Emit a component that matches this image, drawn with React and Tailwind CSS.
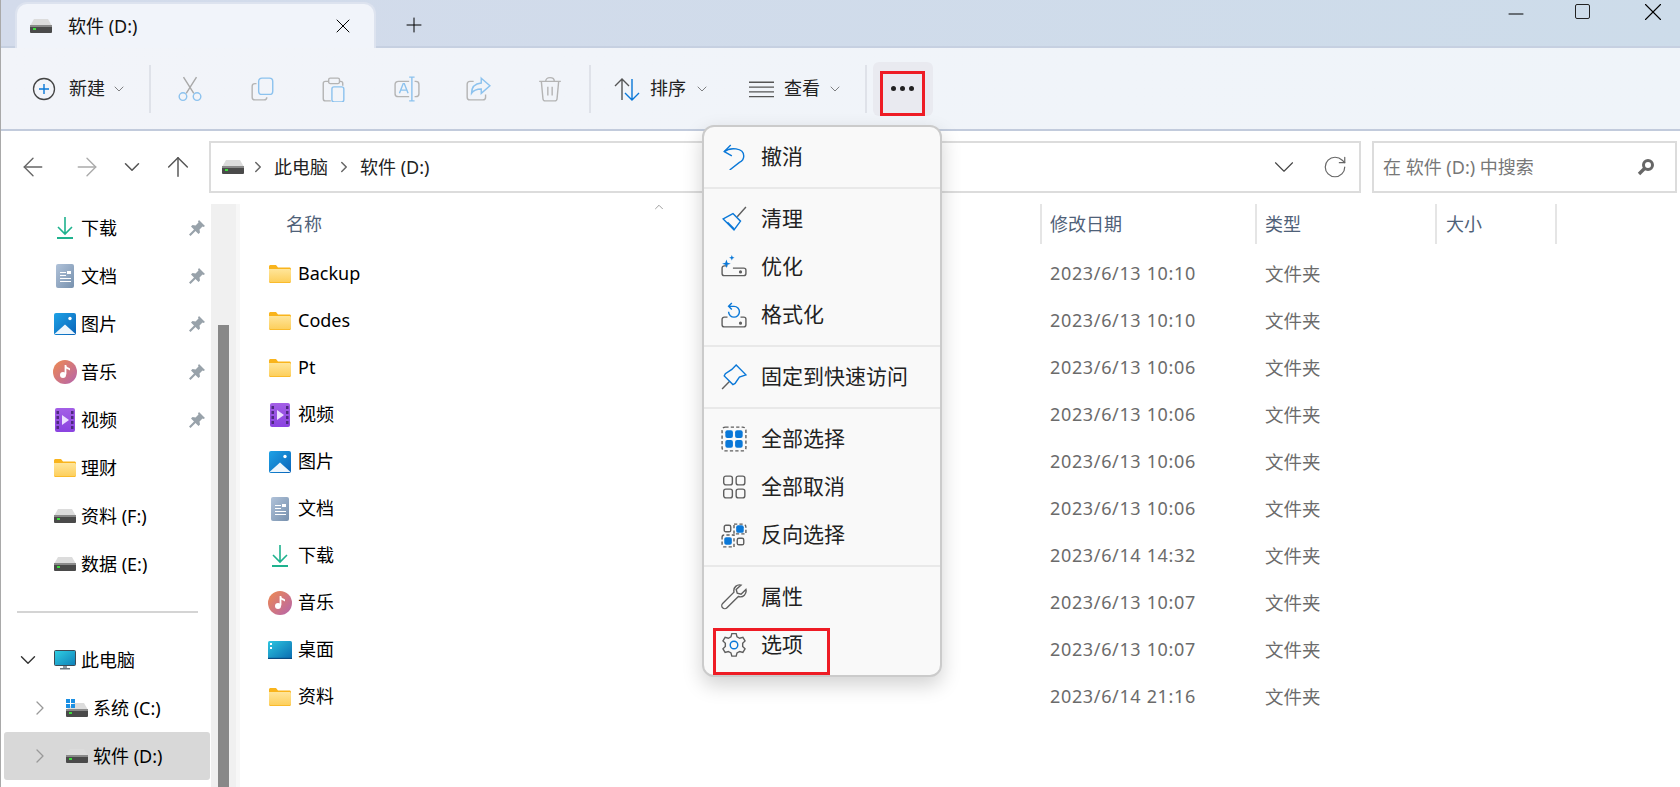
import { ArrowLeft, ArrowRight, ArrowUp, ChevronDown, ChevronRight, Minus, Plus, RotateCw, X } from "lucide-react";

const FONT = "[font-family:'Noto_Sans','Noto_Sans_CJK_SC',sans-serif]";

function Drive({ className = "w-[22px] h-[14px]" }) {
  return (
    <svg viewBox="0 0 22 14" className={className}>
      <path d="M4 0h14l4 7H0z" fill="#dcdcdc" />
      <rect y="6" width="22" height="8" rx="1" fill="#4a4a4a" />
      <rect y="6" width="22" height="2" fill="#8a8a8a" />
      <rect x="3" y="9" width="3" height="2" fill="#3ddc3d" />
    </svg>
  );
}

function Folder() {
  return (
    <svg viewBox="0 0 22 18" className="w-[22px] h-[18px]">
      <defs>
        <linearGradient id="folderFill" x1="0" y1="0" x2="0" y2="1">
          <stop offset="0" stopColor="#ffe59a" />
          <stop offset="1" stopColor="#fdcf5c" />
        </linearGradient>
      </defs>
      <path d="M0 1.500C0 .7.7 0 1.500 0H7l2 2.500h11.500c.8 0 1.500.7 1.500 1.500v12.500c0 .8-.7 1.500-1.500 1.500h-19C.7 18 0 17.300 0 16.500z" fill="#f9b41c" />
      <path d="M0 4h20.500c.8 0 1.500.7 1.500 1.500v10.500c0 .8-.7 1.200-1.500 1.200h-19C.7 17.200 0 16.800 0 16z" fill="url(#folderFill)" />
    </svg>
  );
}

function Video() {
  return (
    <svg viewBox="0 0 20 24" className="w-[20px] h-[24px]">
      <defs>
        <linearGradient id="videoFill" x1="0" y1="0" x2="0" y2="1">
          <stop offset="0" stopColor="#a35fe6" />
          <stop offset="1" stopColor="#8a43e0" />
        </linearGradient>
      </defs>
      <rect width="20" height="24" rx="2" fill="url(#videoFill)" />
      {[3, 8, 13, 18].map((y) => (
        <g key={y} fill="#4e2a7f">
          <rect x="1.500" y={y} width="2.500" height="3" />
          <rect x="16" y={y} width="2.500" height="3" />
        </g>
      ))}
      <path d="M7 7l7 5-7 5z" fill="#ecdfff" />
    </svg>
  );
}

function Picture() {
  return (
    <svg viewBox="0 0 22 22" className="w-[22px] h-[22px]">
      <defs>
        <linearGradient id="picFill" x1="0" y1="0" x2="1" y2="1">
          <stop offset="0" stopColor="#1ea2e6" />
          <stop offset="1" stopColor="#0a63b8" />
        </linearGradient>
      </defs>
      <rect width="22" height="22" rx="2" fill="url(#picFill)" />
      <circle cx="16" cy="5.500" r="1.700" fill="#fff" />
      <path d="M1 20.500L11 11.500l10 9V21H1z" fill="#eef6fc" />
    </svg>
  );
}

function Doc() {
  return (
    <svg viewBox="0 0 18 24" className="w-[18px] h-[24px]">
      <defs>
        <linearGradient id="docFill" x1="0" y1="0" x2="1" y2="1">
          <stop offset="0" stopColor="#b0c2d9" />
          <stop offset="1" stopColor="#7791ae" />
        </linearGradient>
      </defs>
      <rect width="18" height="24" rx="2" fill="url(#docFill)" />
      <g fill="#fff">
        <rect x="4" y="8" width="6" height="1" />
        <rect x="4" y="11" width="6" height="1" />
        <rect x="4" y="14" width="11" height="1" />
        <rect x="4" y="17" width="11" height="1" />
        <rect x="11" y="7" width="4" height="3" />
      </g>
    </svg>
  );
}

function Download() {
  return (
    <svg viewBox="0 0 18 22" className="w-[18px] h-[22px]" fill="none" stroke="#1fb28e" strokeWidth="1.600">
      <path d="M9 0v17M2 10l7 7 7-7" />
      <path d="M1 21h16" strokeWidth="2" />
    </svg>
  );
}

function Music() {
  return (
    <svg viewBox="0 0 24 24" className="w-[24px] h-[24px]">
      <defs>
        <linearGradient id="musicFill" x1="0" y1="0" x2="1" y2="1">
          <stop offset="0" stopColor="#ef8a4f" />
          <stop offset="1" stopColor="#b564ad" />
        </linearGradient>
      </defs>
      <circle cx="12" cy="12" r="12" fill="url(#musicFill)" />
      <path d="M12.500 5v9.500" stroke="#fff" strokeWidth="1.800" />
      <path d="M12.500 5c.5 2 3.500 2.500 4.500 3.500v2c-1.500-1-3.500-1.500-4.500-2.500z" fill="#fff" />
      <circle cx="10" cy="15" r="3" fill="#fff" />
    </svg>
  );
}

function Desktop() {
  return (
    <svg viewBox="0 0 24 18" className="w-[24px] h-[18px]">
      <defs>
        <linearGradient id="deskFill" x1="0" y1="0" x2="1" y2="1">
          <stop offset="0" stopColor="#2dc6e0" />
          <stop offset="1" stopColor="#0a6bb0" />
        </linearGradient>
      </defs>
      <rect width="24" height="18" rx="1.500" fill="url(#deskFill)" />
      <rect y="16.800" width="24" height="1.200" fill="#0b4a80" />
      <rect x="2" y="2" width="2" height="2" fill="#fff" />
      <rect x="2" y="6" width="2" height="2" fill="#fff" />
    </svg>
  );
}

function Monitor() {
  return (
    <svg viewBox="0 0 22 20" className="w-[22px] h-[20px]">
      <defs>
        <linearGradient id="monFill" x1="0" y1="0" x2="1" y2="1">
          <stop offset="0" stopColor="#2fd0e4" />
          <stop offset="1" stopColor="#0f7fb8" />
        </linearGradient>
      </defs>
      <rect x=".5" y=".5" width="21" height="15" rx="1" fill="url(#monFill)" stroke="#3d4a55" />
      <rect x="9" y="16" width="4" height="2" fill="#8d99a3" />
      <rect x="6" y="18" width="10" height="1.500" fill="#6b7680" />
    </svg>
  );
}

function SystemDrive() {
  return (
    <svg viewBox="0 0 22 18" className="w-[22px] h-[18px]">
      <path d="M8 4h10l4 7H0z" fill="#dcdcdc" />
      <rect y="10" width="22" height="8" rx="1" fill="#4a4a4a" />
      <rect y="10" width="22" height="2" fill="#8a8a8a" />
      <rect x="3" y="13" width="3" height="2" fill="#3ddc3d" />
      <g fill="#1a8fe3">
        <rect width="4" height="4" />
        <rect x="5" width="4" height="4" />
        <rect y="5" width="4" height="4" />
        <rect x="5" y="5" width="4" height="4" />
      </g>
    </svg>
  );
}

function Pin({ className = "w-[16px] h-[16px]" }) {
  return (
    <svg viewBox="0 0 16 16" className={className}>
      <path d="M10 0l6 6-1.500 1-1-.5L10.500 9.500l.5 3-1.500 1.500-3-3L1.500 16 0 14.500 5 9.500 2 6.500 3.500 5l3 .5L9.500 2.500 9 1.500z" fill="#98a2aa" />
    </svg>
  );
}

function ToolIcon({ children }) {
  return (
    <svg viewBox="0 0 24 24" className="w-[26px] h-[26px]" fill="none" strokeWidth="1.300">
      {children}
    </svg>
  );
}

const CaretDown = () => <ChevronDown size={16} strokeWidth={1} className="text-[#444]" />;

function ToolSep({ className }) {
  return <div className={`w-[2px] h-[48px] bg-[#dfe2e9] ${className}`} />;
}

function MenuIcon({ children }) {
  return (
    <svg viewBox="0 0 24 24" className="w-[26px] h-[26px] shrink-0" fill="none" strokeWidth="1.300" stroke="#5f5f5f">
      {children}
    </svg>
  );
}

function MenuItem({ icon, label }) {
  return (
    <div className="flex h-[48px] items-center pl-[17px]">
      {icon}
      <span className="ml-[14px] text-[21px] text-[#222]">{label}</span>
    </div>
  );
}

const MenuSep = () => (
  <div className="flex h-[14px] items-center">
    <div className="h-[2px] w-full bg-[#e9e9e9]" />
  </div>
);

const Tile = ({ x, y, fill }) =>
  fill ? (
    <rect x={x} y={y} width="7" height="7" rx="1.800" fill="#0a78d8" stroke="none" />
  ) : (
    <rect x={x} y={y} width="7" height="7" rx="1.800" />
  );

const sidebarItems = [
  { icon: <Download />, label: "下载", pin: true },
  { icon: <Doc />, label: "文档", pin: true },
  { icon: <Picture />, label: "图片", pin: true },
  { icon: <Music />, label: "音乐", pin: true },
  { icon: <Video />, label: "视频", pin: true },
  { icon: <Folder />, label: "理财" },
  { icon: <Drive />, label: "资料 (F:)" },
  { icon: <Drive />, label: "数据 (E:)" },
];

const files = [
  { icon: <Folder />, name: "Backup", date: "2023/6/13 10:10" },
  { icon: <Folder />, name: "Codes", date: "2023/6/13 10:10" },
  { icon: <Folder />, name: "Pt", date: "2023/6/13 10:06" },
  { icon: <Video />, name: "视频", date: "2023/6/13 10:06" },
  { icon: <Picture />, name: "图片", date: "2023/6/13 10:06" },
  { icon: <Doc />, name: "文档", date: "2023/6/13 10:06" },
  { icon: <Download />, name: "下载", date: "2023/6/14 14:32" },
  { icon: <Music />, name: "音乐", date: "2023/6/13 10:07" },
  { icon: <Desktop />, name: "桌面", date: "2023/6/13 10:07" },
  { icon: <Folder />, name: "资料", date: "2023/6/14 21:16" },
];

function SideIcon({ children }) {
  return <div className="flex w-[24px] shrink-0 items-center justify-center">{children}</div>;
}

export default function App() {
  return (
    <div className={`relative flex h-[787px] w-[1680px] flex-col overflow-hidden border-l border-[#a9a9a9] bg-white text-[18px] text-black ${FONT}`}>
      {/* Tab strip */}
      <div className="flex h-[48px] shrink-0 items-end border-b-2 border-[#c6d0e1] bg-gradient-to-r from-[#d3dbeb] to-[#cddcea]">
        <div className="mb-[-2px] ml-[14px] flex h-[46px] w-[361px] items-center rounded-t-[12px] border-2 border-b-0 border-[#dde3ef] bg-[#f1f4fa] pl-[13px]">
          <Drive />
          <span className="ml-[16px] text-[#111]">软件 (D:)</span>
          <X size={24} strokeWidth={1} className="ml-[194px]" />
        </div>
        <Plus size={24} strokeWidth={1} className="mb-[9px] ml-[26px]" />
        <div className="ml-auto flex items-start self-start pt-[1px]">
          <Minus size={24} strokeWidth={1} className="mr-[47px] mt-[1px]" />
          <div className="mr-[48px] mt-[3px] h-[15px] w-[15px] rounded-[2px] border-[1.5px] border-[#222]" />
          <X size={30} strokeWidth={0.9} className="mr-[12px] mt-[-4px]" />
        </div>
      </div>

      {/* Command bar */}
      <div className="flex h-[83px] shrink-0 items-center border-b-2 border-[#c2cbdc] bg-gradient-to-r from-[#f2f4f9] to-[#eff4f9]">
        <svg viewBox="0 0 24 24" className="ml-[31px] h-[24px] w-[24px]" fill="none">
          <circle cx="12" cy="12" r="10.500" stroke="#444" strokeWidth="1.300" />
          <path d="M12 7v10M7 12h10" stroke="#0a78d8" strokeWidth="1.400" />
        </svg>
        <span className="ml-[13px] text-[#222]">新建</span>
        <div className="ml-[6px]"><CaretDown /></div>
        <ToolSep className="ml-[22px]" />
        <div className="ml-[26px]">
          <ToolIcon>
            <path d="M6 1l9.500 15M18 1L8.500 16" stroke="#a9a9a9" />
            <circle cx="5.500" cy="19" r="3.500" stroke="#8cc2ee" />
            <circle cx="18.500" cy="19" r="3.500" stroke="#8cc2ee" />
          </ToolIcon>
        </div>
        <div className="ml-[47px]">
          <ToolIcon>
            <path d="M6 7H4.500C3 7 2 8 2 9.500v10C2 21 3 22 4.500 22H13c1.500 0 2.500-1 2.500-2.500" stroke="#b4b4b4" />
            <rect x="8" y="2" width="13" height="15" rx="3" stroke="#8cc2ee" />
          </ToolIcon>
        </div>
        <div className="ml-[44px]">
          <ToolIcon>
            <path d="M8 5H5C3.500 5 3 6 3 7v14c0 1 .5 2 2 2h5" stroke="#b4b4b4" />
            <path d="M18 5h1c1 0 2 1 2 2v2" stroke="#b4b4b4" />
            <rect x="8" y="2" width="10" height="5" rx="1.500" stroke="#b4b4b4" />
            <rect x="11" y="10" width="11" height="14" rx="2" stroke="#8cc2ee" />
          </ToolIcon>
        </div>
        <div className="ml-[48px]">
          <ToolIcon>
            <path d="M14 5H4C2.500 5 1 6 1 7.500v9C1 18 2.500 19 4 19h10M19 5h1c1.500 0 3 1 3 2.500v9c0 1.500-1.500 2.500-3 2.500h-1" stroke="#b4b4b4" />
            <path d="M5 16l3.500-9h1l3.500 9M6.500 13h5" stroke="#8cc2ee" />
            <path d="M14 1h5M14 23h5M16.500 1v22" stroke="#8cc2ee" />
          </ToolIcon>
        </div>
        <div className="ml-[45px]">
          <ToolIcon>
            <path d="M8 5H4.500C3 5 2 6 2 7.500v12C2 21 3 22 4.500 22h12c1.500 0 2.500-1 2.500-2.500V17" stroke="#b4b4b4" />
            <path d="M15 2l8 7-8 7v-4c-4 0-7 1-9 4 0-6 4-9 9-9.500z" stroke="#8cc2ee" />
          </ToolIcon>
        </div>
        <div className="ml-[46px]">
          <ToolIcon>
            <path d="M2 5h20M8 5c0-2 1.500-3.500 4-3.500S16 3 16 5M4 5l1.500 16c.1 1 1 2 2 2h9c1 0 1.900-1 2-2L20 5M10 10v8M14 10v8" stroke="#b4b4b4" />
          </ToolIcon>
        </div>
        <ToolSep className="ml-[26px]" />
        <svg viewBox="0 0 26 24" className="ml-[23px] h-[24px] w-[26px]" fill="none" strokeWidth="1.400">
          <path d="M8 23V2M1 9l7-7 7 7" stroke="#555" />
          <path d="M18 2v21M11 16l7 7 7-7" stroke="#0a78d8" />
        </svg>
        <span className="ml-[10px] text-[#222]">排序</span>
        <div className="ml-[8px]"><CaretDown /></div>
        <svg viewBox="0 0 26 18" className="ml-[39px] h-[18px] w-[25px]" fill="none" stroke="#555" strokeWidth="1.400">
          <path d="M0 2h26M0 7h26M0 12h26M0 17h26" />
        </svg>
        <span className="ml-[10px] text-[#222]">查看</span>
        <div className="ml-[7px]"><CaretDown /></div>
        <ToolSep className="ml-[22px]" />
        <div className="ml-[6px] flex h-[54px] w-[60px] items-center justify-center gap-[4px] rounded-[6px] bg-[#e9eaf0] pr-[2px]">
          <span className="h-[5px] w-[5px] rounded-full bg-[#222]" />
          <span className="h-[5px] w-[5px] rounded-full bg-[#222]" />
          <span className="h-[5px] w-[5px] rounded-full bg-[#222]" />
        </div>
      </div>

      {/* Address row */}
      <div className="flex h-[73px] shrink-0 items-start pt-[10px]">
        <div className="flex h-[52px] items-center">
          <ArrowLeft size={30} strokeWidth={1.1} className="ml-[17px] text-[#666]" />
          <ArrowRight size={30} strokeWidth={1.1} className="ml-[24px] text-[#aaa]" />
          <ChevronDown size={26} strokeWidth={1.4} className="ml-[17px] text-[#555]" />
          <ArrowUp size={32} strokeWidth={1.1} className="ml-[17px] text-[#555]" />
        </div>
        <div className="ml-[15px] flex h-[52px] w-[1152px] items-center border-2 border-[#dcdcdc] pl-[11px] pr-[11px]">
          <Drive />
          <ChevronRight size={18} strokeWidth={2} className="ml-[5px] text-[#666]" />
          <span className="ml-[7px] text-[#222]">此电脑</span>
          <ChevronRight size={18} strokeWidth={2} className="ml-[7px] text-[#666]" />
          <span className="ml-[7px] text-[#222]">软件 (D:)</span>
          <ChevronDown size={34} strokeWidth={0.8} className="ml-auto text-[#444]" />
          <RotateCw size={26} strokeWidth={1.1} className="ml-[21px] text-[#666]" />
        </div>
        <div className="ml-[11px] flex h-[52px] w-[305px] items-center border-2 border-[#dcdcdc] pl-[9px] pr-[20px]">
          <span className="text-[#777]">在 软件 (D:) 中搜索</span>
          <svg viewBox="0 0 18 18" className="ml-auto h-[18px] w-[18px]" fill="none" stroke="#666">
            <circle cx="11" cy="7" r="4.500" strokeWidth="3" />
            <path d="M7.500 10.500L2 16" strokeWidth="3.400" />
          </svg>
        </div>
      </div>

      {/* Body */}
      <div className="flex min-h-0 flex-1">
        {/* Navigation pane */}
        <div className="w-[209px] shrink-0">
          {sidebarItems.map((item) => (
            <div key={item.label} className="flex h-[48px] items-center pl-[52px]">
              <SideIcon>{item.icon}</SideIcon>
              <span className="ml-[4px]">{item.label}</span>
              {item.pin && <div className="ml-auto mr-[5px]"><Pin /></div>}
            </div>
          ))}
          <div className="flex h-[48px] items-center pl-[16px] pr-[12px]">
            <div className="h-[2px] w-full bg-[#d4d4d4]" />
          </div>
          <div className="flex h-[48px] items-center pl-[14px]">
            <ChevronDown size={26} strokeWidth={1.3} className="text-[#333]" />
            <div className="ml-[12px]"><SideIcon><Monitor /></SideIcon></div>
            <span className="ml-[4px]">此电脑</span>
          </div>
          <div className="flex h-[48px] items-center pl-[27px]">
            <ChevronRight size={24} strokeWidth={1.3} className="text-[#999]" />
            <div className="ml-[13px]"><SideIcon><SystemDrive /></SideIcon></div>
            <span className="ml-[4px]">系统 (C:)</span>
          </div>
          <div className="ml-[3px] flex h-[48px] items-center rounded-[3px] bg-[#d8d8d8] pl-[24px]">
            <ChevronRight size={24} strokeWidth={1.3} className="text-[#999]" />
            <div className="ml-[13px]"><SideIcon><Drive /></SideIcon></div>
            <span className="ml-[4px]">软件 (D:)</span>
          </div>
        </div>

        {/* Scrollbar */}
        <div className="ml-[1px] flex w-[25px] shrink-0 justify-center self-stretch bg-[#f0f0f0]">
          <div className="mt-[121px] w-[11px] bg-[#888]" />
        </div>
        <div className="w-[4px] shrink-0 bg-[#f7f7f7]" />

        {/* File list */}
        <div className="min-w-0 flex-1">
          <div className="relative grid h-[40px] grid-cols-[800px_215px_180px_122px] text-[#4f6178]">
            <div className="flex items-center pl-[46px]">名称</div>
            <div className="flex items-center border-l-2 border-[#e5e5e5] pl-[8px]">修改日期</div>
            <div className="flex items-center border-l-2 border-[#e5e5e5] pl-[8px]">类型</div>
            <div className="flex items-center border-x-2 border-[#e5e5e5] pl-[9px]">大小</div>
            <ChevronDown size={14} strokeWidth={1.2} className="absolute left-[412px] top-[-4px] rotate-180 text-[#777]" />
          </div>
          <div className="mt-[6px]">
            {files.map((file) => (
              <div key={file.name} className="grid h-[47px] grid-cols-[800px_215px_180px_122px] items-center">
                <div className="flex items-center pl-[28px]">
                  <SideIcon>{file.icon}</SideIcon>
                  <span className="ml-[6px]">{file.name}</span>
                </div>
                <div className="pl-[10px] tracking-[0.65px] text-[#6b6b6b]">{file.date}</div>
                <div className="pl-[10px] text-[18.5px] text-[#6b6b6b]">文件夹</div>
                <div />
              </div>
            ))}
          </div>
        </div>
      </div>

      {/* Context menu */}
      <div className="absolute left-[701px] top-[125px] w-[240px] rounded-[12px] border-2 border-[#cbcbcb] bg-[#f9f9f9] pt-[6px] pb-[6px] shadow-[0_8px_20px_rgba(0,0,0,0.18)]">
        <MenuItem
          label="撤消"
          icon={
            <MenuIcon>
              <path d="M9 1L3 7l7 4" stroke="#0a78d8" />
              <path d="M3 7c5-4 18-4 18 4 0 3-2 5-4 6L8 24" stroke="#0a78d8" />
            </MenuIcon>
          }
        />
        <MenuSep />
        <MenuItem
          label="清理"
          icon={
            <MenuIcon>
              <path d="M23 1l-8 9" />
              <path d="M11 7l7 7-6 8-10-10z" stroke="#0a78d8" />
              <path d="M6 15l6 6" stroke="#0a78d8" />
            </MenuIcon>
          }
        />
        <MenuItem
          label="优化"
          icon={
            <MenuIcon>
              <path d="M6 11H3c-1 0-2 1-2 2v5c0 1 1 2 2 2h18c1 0 2-1 2-2v-3c0-1-1-2-2-2H11" />
              <circle cx="18" cy="16.500" r=".8" fill="#5f5f5f" />
              <path d="M5 5l1 3 3 1-3 1-1 3-1-3-3-1 3-1zM10 1l.7 1.800L12.500 3.500 10.700 4.200 10 6 9.300 4.200 7.500 3.500 9.300 2.800z" fill="#0a78d8" stroke="none" />
            </MenuIcon>
          }
        />
        <MenuItem
          label="格式化"
          icon={
            <MenuIcon>
              <path d="M6 14H3c-1 0-2 1-2 2v5c0 1 1 2 2 2h18c1 0 2-1 2-2v-5c0-1-1-2-2-2h-3" />
              <circle cx="18" cy="19.500" r=".8" fill="#5f5f5f" />
              <path d="M10 1L7 4l3 3M7 4h5c3 0 5 2.500 5 5 0 3-2.500 5-5 5s-5-2-5-5" stroke="#0a78d8" />
            </MenuIcon>
          }
        />
        <MenuSep />
        <MenuItem
          label="固定到快速访问"
          icon={
            <MenuIcon>
              <path d="M1 23l7-7" />
              <path d="M14 1l9 9-6 2-4 6-2 1-8-8 1-2 6-4z" stroke="#0a78d8" />
            </MenuIcon>
          }
        />
        <MenuSep />
        <MenuItem
          label="全部选择"
          icon={
            <MenuIcon>
              <rect x="1" y="1" width="22" height="22" rx="3" strokeDasharray="3 2" />
              <Tile x="4" y="4" fill />
              <Tile x="13" y="4" fill />
              <Tile x="4" y="13" fill />
              <Tile x="13" y="13" fill />
            </MenuIcon>
          }
        />
        <MenuItem
          label="全部取消"
          icon={
            <MenuIcon>
              <rect x="2.500" y="2" width="8" height="8" rx="2" />
              <rect x="14" y="2" width="8" height="8" rx="2" />
              <rect x="2.500" y="14" width="8" height="8" rx="2" />
              <rect x="14" y="14" width="8" height="8" rx="2" />
            </MenuIcon>
          }
        />
        <MenuItem
          label="反向选择"
          icon={
            <MenuIcon>
              <path d="M12 2h8c2 0 3 1 3 3v6h-11zM1 14c0-1 1-2 2-2h9v11H3c-1 0-2-1-2-2z" strokeDasharray="3 2" />
              <rect x="3" y="3" width="6" height="6" rx="1.500" />
              <rect x="15" y="15" width="6" height="6" rx="1.500" />
              <Tile x="14" y="3" fill />
              <Tile x="3" y="14" fill />
            </MenuIcon>
          }
        />
        <MenuSep />
        <MenuItem
          label="属性"
          icon={
            <MenuIcon>
              <path d="M23 5l-4.500 4.500L15 8.500l-1-3.500L18.500 1C15 0 11 3 12 7.500L1.500 18c-1 1-1 3 0 4s3 1 4 0L16 11.500C20.500 13 24 9 23 5z" />
            </MenuIcon>
          }
        />
        <MenuItem
          label="选项"
          icon={
            <MenuIcon>
              <path d="M10 1.500h4l.8 3 2.400 1.300 3-.9 2 3.400-2.200 2.200v2.800l2.200 2.200-2 3.400-3-.9-2.400 1.300-.8 3h-4l-.8-3-2.400-1.300-3 .9-2-3.400 2.200-2.200v-2.800L1.800 8.300l2-3.400 3 .9 2.400-1.300z" />
              <circle cx="12" cy="12" r="3.500" stroke="#0a78d8" />
            </MenuIcon>
          }
        />
      </div>

      {/* Red annotation boxes */}
      <div className="absolute left-[879px] top-[71px] h-[45px] w-[45px] border-[3px] border-[#ee1c25]" />
      <div className="absolute left-[712px] top-[628px] h-[47px] w-[117px] border-[3px] border-[#ee1c25]" />
    </div>
  );
}
